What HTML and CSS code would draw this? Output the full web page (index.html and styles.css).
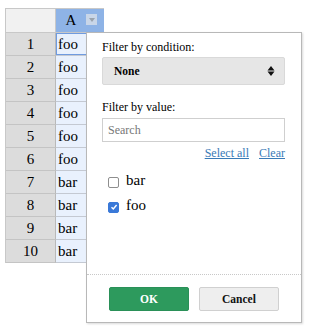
FILE: index.html
```html
<!DOCTYPE html>
<html>
<head>
<meta charset="utf-8">
<link rel="stylesheet" href="styles.css">
</head>
<body>
<div class="page">
  <div class="sheet">
    <div class="corner"></div>
    <div class="colhead">A<span class="fbtn"><svg width="8" height="6" viewBox="0 0 8 6"><path d="M1 1h6L4 5z" fill="#9aa3ad"/></svg></span></div>
    <div class="rh">1</div><div class="cell sel">foo</div>
    <div class="rh">2</div><div class="cell">foo</div>
    <div class="rh">3</div><div class="cell">foo</div>
    <div class="rh">4</div><div class="cell">foo</div>
    <div class="rh">5</div><div class="cell">foo</div>
    <div class="rh">6</div><div class="cell">foo</div>
    <div class="rh">7</div><div class="cell">bar</div>
    <div class="rh">8</div><div class="cell">bar</div>
    <div class="rh">9</div><div class="cell">bar</div>
    <div class="rh">10</div><div class="cell">bar</div>
  </div>
  <div class="menu">
    <div class="body">
      <div class="label">Filter by condition:</div>
      <div class="select"><span>None</span><svg width="8" height="12" viewBox="0 0 8 12"><path d="M4 1L7.5 5.5H0.5z M4 11L7.5 6.5H0.5z" fill="#111"/></svg></div>
      <div class="label second">Filter by value:</div>
      <div class="search">Search</div>
      <div class="links"><a href="#">Select all</a><a href="#">Clear</a></div>
      <div class="list">
        <div class="item"><span class="cb"></span><span class="txt">bar</span></div>
        <div class="item"><span class="cb on"><svg width="8" height="8" viewBox="0 0 8 8"><path d="M1.5 4.2L3.3 6L6.6 2" stroke="#fff" stroke-width="1.4" fill="none"/></svg></span><span class="txt">foo</span></div>
      </div>
    </div>
    <div class="foot">
      <button class="btn ok">OK</button>
      <button class="btn cancel">Cancel</button>
    </div>
  </div>
</div>
</body>
</html>
```

FILE: styles.css
```css
html, body { margin: 0; padding: 0; background: #fff; }
body { font-family: "Liberation Serif", "Times New Roman", serif; color: #000; }
.page { position: relative; width: 313px; height: 332px; padding: 8px 0 0 5px; box-sizing: border-box; }
.sheet {
  display: grid;
  grid-template-columns: 50px 48px;
  grid-template-rows: 24px repeat(10, 23px);
  border-top: 1px solid #c8c8c8;
  border-left: 1px solid #c8c8c8;
  width: 98px;
}
.corner { background: #f1f1f1; border-right: 1px solid #c8c8c8; border-bottom: 1px solid #c8c8c8; }
.colhead {
  background: #8eb3e6;
  border-bottom: 1px solid #c8c8c8;
  display: flex; align-items: center; justify-content: center;
  font-size: 15px; position: relative; padding-right: 18px;
}
.fbtn {
  position: absolute; right: 7px; top: 5px;
  width: 11px; height: 11px; background: #c9d6e8;
  display: flex; align-items: center; justify-content: center;
}
.rh {
  background: #dcdcdc;
  border-right: 1px solid #b9b9b9;
  border-bottom: 1px solid #c4c4c4;
  display: flex; align-items: center; justify-content: center;
  font-size: 15px;
}
.cell {
  background: #e9f1fd;
  border-bottom: 1px solid #c4c9d2;
  font-size: 15px; padding-left: 2px;
  display: flex; align-items: center;
}
.cell.sel { box-shadow: inset 0 0 0 1px #6f9be0; }
.menu {
  position: absolute; left: 86px; top: 32px;
  width: 216px; height: 291px; box-sizing: border-box;
  background: #fff; border: 1px solid #b8b8b8;
  box-shadow: 1px 1px 2px rgba(0,0,0,0.15);
  display: flex; flex-direction: column;
}
.body { padding: 7px 16px 0 15px; flex: 1; }
.label { font-size: 12px; line-height: 14px; }
.label.second { margin-top: 15px; }
.select {
  margin-top: 3px; height: 28px; box-sizing: border-box;
  background: #e6e6e6; border: 1px solid #d9d9d9; border-radius: 2px;
  display: flex; align-items: center; justify-content: space-between;
  padding: 0 9px 0 11px; font-weight: bold; font-size: 11.5px;
}
.search {
  margin-top: 4px; height: 24px; box-sizing: border-box;
  border: 1px solid #cfcfcf; padding: 0 5px;
  display: flex; align-items: center;
  font-size: 12px; color: #777;
}
.links { display: flex; justify-content: flex-end; gap: 10px; margin-top: 4px; font-size: 12px; line-height: 14px; }
.links a { color: #3a7bb7; text-decoration: underline; }
.list { margin-top: 11px; display: flex; flex-direction: column; gap: 6px; padding-left: 6px; }
.item { display: flex; align-items: center; gap: 7px; }
.txt { font-family: "Liberation Serif", "Times New Roman", serif; font-size: 15px; line-height: 19px; }
.cb {
  width: 9px; height: 9px; border: 1px solid #8e8e8e; border-radius: 2px; background: #fff;
  display: flex; align-items: center; justify-content: center; margin-top: 3px;
}
.cb.on { background: #3a79d8; border-color: #3a79d8; }
.foot {
  border-top: 1px dotted #c8c8c8;
  height: 48px; box-sizing: border-box;
  display: flex; align-items: center; justify-content: center; gap: 10px;
  padding-top: 1px;
}
.btn {
  width: 80px; height: 24px; font-family: "Liberation Serif", "Times New Roman", serif; font-weight: bold; font-size: 11.5px;
  border-radius: 2px; border: 1px solid #d0d0d0; padding: 0;
}
.btn.ok { background: #2d9a5d; border-color: #2a9058; color: #fff; }
.btn.cancel { background: #eeeeee; color: #111; }
```
